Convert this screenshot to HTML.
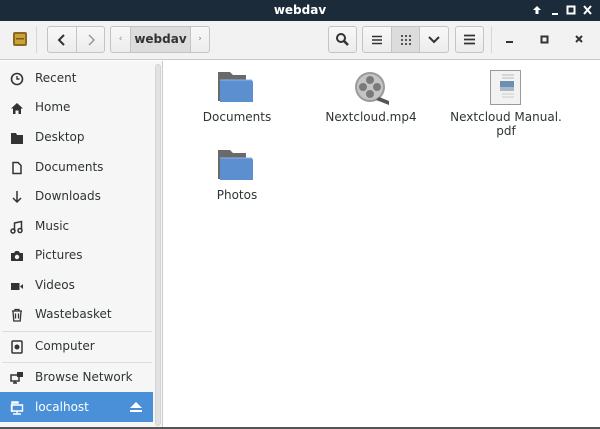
<!DOCTYPE html>
<html><head><style>
*{margin:0;padding:0;box-sizing:border-box}
body{width:600px;height:429px;overflow:hidden;font-family:"DejaVu Sans","Liberation Sans",sans-serif;font-size:12px;color:#2e3436;background:#fff;position:relative}
.abs{position:absolute}
#title{left:0;top:0;width:600px;height:21px;background:#1c2b3a;color:#fff;font-weight:bold;font-size:12px;text-align:center;line-height:21px}
#tb{left:0;top:21px;width:600px;height:39px;background:#f2f2f2;border-bottom:1px solid #c8c8c8}
.btn{position:absolute;top:26px;height:27px;border:1px solid #c4c4c4;border-radius:3px;background:linear-gradient(#f8f8f8,#ececec)}
.seg{position:absolute;top:0;height:25px;border-right:1px solid #c4c4c4;text-align:center;line-height:25px;color:#333}
#side{left:0;top:61px;width:163px;height:368px;background:#f6f6f6;border-right:1px solid #ccc}
.it{position:absolute;left:0;width:153px;height:29px;line-height:31px;padding-left:35px;font-size:12px;color:#2e3436}
.ic{position:absolute;left:10px;top:9px;width:14px;height:14px}
.lbl{position:absolute;font-size:12px;text-align:center;color:#2e3436}
</style></head><body>
<div id="title" class="abs">webdav
<svg class="abs" style="right:0;top:0" width="70" height="21"><g fill="#fff" stroke="#fff"><path d="M7 6l-4 4h2.5v4h3v-4H11z" stroke="none"/><rect x="22" y="13" width="6" height="2" stroke="none"/><rect x="37.5" y="6.5" width="7" height="7" fill="none" stroke-width="2"/><path d="M54 6l7 8M61 6l-7 8" stroke-width="2"/></g></svg>
</div>
<div id="tb" class="abs"></div>
<svg class="abs" style="left:12px;top:31px" width="16" height="16"><rect x="1" y="1" width="14" height="14" rx="2" fill="#8a6a1e"/><rect x="3" y="3" width="10" height="10" fill="#c9a23a"/><rect x="4" y="7" width="8" height="1.5" fill="#7a5a18"/></svg>
<div class="abs" style="left:36px;top:26px;width:1px;height:27px;background:#d6d6d6"></div>
<div class="btn" style="left:47px;width:58px"><div class="seg" style="left:0;width:29px"><svg width="10" height="12" style="margin-top:7px"><path d="M7 1L2 6l5 5" fill="none" stroke="#333" stroke-width="2"/></svg></div><div class="seg" style="left:29px;width:28px;border:none"><svg width="10" height="12" style="margin-top:7px"><path d="M3 1l5 5-5 5" fill="none" stroke="#999" stroke-width="1.5"/></svg></div></div>
<div class="btn" style="left:110px;width:100px"><div class="seg" style="left:0;width:20px;font-size:9px;color:#888">‹</div><div class="seg" style="left:20px;width:60px;background:#dcdcdc;font-weight:bold;color:#333">webdav</div><div class="seg" style="left:80px;width:18px;border:none;font-size:9px;color:#888">›</div></div>
<div class="btn" style="left:328px;width:29px"><svg width="27" height="25"><circle cx="12" cy="11" r="4" fill="none" stroke="#333" stroke-width="2"/><path d="M15 14l4 4" stroke="#333" stroke-width="2.5"/></svg></div>
<div class="btn" style="left:362px;width:87px"><div class="seg" style="left:0;width:29px"><svg width="12" height="10" style="margin-top:8px"><path d="M1 1.5h10M1 5h10M1 8.5h10" stroke="#333" stroke-width="1.6"/></svg></div><div class="seg" style="left:29px;width:28px;background:#dcdcdc"><svg width="10" height="10" style="margin-top:8px" fill="#555"><rect x="0" y="0" width="2" height="2"/><rect x="4" y="0" width="2" height="2"/><rect x="8" y="0" width="2" height="2"/><rect x="0" y="4" width="2" height="2"/><rect x="4" y="4" width="2" height="2"/><rect x="8" y="4" width="2" height="2"/><rect x="0" y="8" width="2" height="2"/><rect x="4" y="8" width="2" height="2"/><rect x="8" y="8" width="2" height="2"/></svg></div><div class="seg" style="left:57px;width:28px;border:none"><svg width="14" height="10" style="margin-top:8px"><path d="M2 2l5 5 5-5" fill="none" stroke="#333" stroke-width="2"/></svg></div></div>
<div class="btn" style="left:455px;width:29px"><svg width="27" height="25"><path d="M8 8.5h11M8 12.5h11M8 16.5h11" stroke="#333" stroke-width="1.8"/></svg></div>
<div class="abs" style="left:491px;top:26px;width:1px;height:27px;background:#d6d6d6"></div>
<svg class="abs" style="left:500px;top:30px" width="95" height="20"><rect x="6" y="11" width="7" height="2" fill="#333"/><rect x="41.5" y="6.5" width="6" height="6" fill="none" stroke="#333" stroke-width="2"/><path d="M76 6l6 6M82 6l-6 6" stroke="#333" stroke-width="2"/></svg>
<div id="side" class="abs"></div>
<div class="abs" style="left:155px;top:64px;width:6px;height:362px;border-radius:3px;background:#e2e2e2;border:1px solid #d4d4d4"></div>
<div class="it" style="top:63px"><svg class="ic" viewBox="0 0 14 14"><circle cx="7" cy="7" r="5.5" fill="none" stroke="#333" stroke-width="1.6"/><path d="M7 4v3h2.5" fill="none" stroke="#333" stroke-width="1.4"/></svg>Recent</div>
<div class="it" style="top:92px"><svg class="ic" viewBox="0 0 14 14"><path d="M1 7.5L7 2l6 5.5H11V13H8.5V9.5h-3V13H3V7.5z" fill="#333"/></svg>Home</div>
<div class="it" style="top:122px"><svg class="ic" viewBox="0 0 14 14"><path d="M1 2h5l1 2h6v9H1z" fill="#333"/></svg>Desktop</div>
<div class="it" style="top:152px"><svg class="ic" viewBox="0 0 14 14"><path d="M3 1.5h5l3 3v8H3z" fill="none" stroke="#333" stroke-width="1.5"/></svg>Documents</div>
<div class="it" style="top:181px"><svg class="ic" viewBox="0 0 14 14"><path d="M7 1v10M3 8l4 4 4-4" fill="none" stroke="#333" stroke-width="1.5"/></svg>Downloads</div>
<div class="it" style="top:211px"><svg class="ic" viewBox="0 0 14 14"><path d="M4.5 11V3l7-1.5V10" fill="none" stroke="#333" stroke-width="1.5"/><circle cx="3" cy="11" r="2" fill="none" stroke="#333" stroke-width="1.5"/><circle cx="10" cy="10.5" r="2" fill="none" stroke="#333" stroke-width="1.5"/></svg>Music</div>
<div class="it" style="top:240px"><svg class="ic" viewBox="0 0 14 14"><path d="M1 4h3l1.5-2h3L10 4h3v8H1z" fill="#333"/><circle cx="7" cy="8" r="2.2" fill="#f6f6f6"/></svg>Pictures</div>
<div class="it" style="top:270px"><svg class="ic" viewBox="0 0 14 14"><rect x="1" y="4" width="8.5" height="7" fill="#333"/><path d="M10 7.5l3-2.5v5z" fill="#333"/></svg>Videos</div>
<div class="it" style="top:299px"><svg class="ic" viewBox="0 0 14 14"><path d="M2 3h10M5 3V1.5h4V3M3 3.5l.8 9.5h6.4L11 3.5M5.5 5.5v5M8.5 5.5v5" fill="none" stroke="#333" stroke-width="1.3"/></svg>Wastebasket</div>
<div class="abs" style="left:2px;top:331px;width:150px;height:1px;background:#ddd"></div>
<div class="it" style="top:331px"><svg class="ic" viewBox="0 0 14 14"><rect x="2" y="1" width="10" height="12" rx="1" fill="none" stroke="#333" stroke-width="1.5"/><circle cx="7" cy="7" r="2.5" fill="#333"/></svg>Computer</div>
<div class="abs" style="left:2px;top:362px;width:150px;height:1px;background:#ddd"></div>
<div class="it" style="top:362px"><svg class="ic" viewBox="0 0 14 14"><rect x="1" y="4" width="8" height="6" fill="none" stroke="#333" stroke-width="1.5"/><path d="M3 12h4M5 10v2" stroke="#333" stroke-width="1.5"/><rect x="7" y="1" width="6" height="5" fill="#333"/></svg>Browse Network</div>
<div class="it" style="top:392px;height:30px;line-height:30px;background:#4a90d9;color:#fff"><svg class="ic" viewBox="0 0 14 14"><path d="M2 1h6v1H2zM2 2v9M1.5 4h11v6h-11zM7 10v2.5M3 13h8" fill="none" stroke="#fff" stroke-width="1.4"/></svg>localhost<svg class="abs" style="left:129px;top:9px" width="14" height="12"><path d="M7 1l6 6H1z" fill="#fff"/><rect x="1" y="9" width="12" height="2" fill="#fff"/></svg></div>
<svg class="abs" style="left:217px;top:70px" width="38" height="34"><path d="M1 2h12l3 3h13v26H1z" fill="#6a6a6a"/><path d="M3 10h32l1 2v20H3z" fill="#5c8fd0"/><path d="M3 10h32" stroke="#8eb6e8"/></svg>
<div class="lbl" style="left:195px;top:110px;width:84px">Documents</div>
<svg class="abs" style="left:352px;top:70px" width="40" height="36"><circle cx="18" cy="17" r="15" fill="#9a9a9a"/><circle cx="18" cy="17" r="13" fill="#c4c4c4"/><circle cx="18" cy="10" r="4" fill="#7a7a7a"/><circle cx="11" cy="17" r="4" fill="#7a7a7a"/><circle cx="25" cy="17" r="4" fill="#7a7a7a"/><circle cx="18" cy="24" r="4" fill="#7a7a7a"/><path d="M27 27l10 4v4l-13-5z" fill="#555"/></svg>
<div class="lbl" style="left:320px;top:110px;width:102px">Nextcloud.mp4</div>
<svg class="abs" style="left:490px;top:70px" width="32" height="36"><rect x="0.5" y="0.5" width="30" height="34" fill="#f2f2f2" stroke="#9a9a9a"/><path d="M12 5h12M12 8h12" stroke="#bbb"/><rect x="10" y="11" width="14" height="10" fill="#6d8fb0"/><rect x="10" y="17" width="14" height="4" fill="#a8b8c8"/><path d="M12 24h12M12 27h12" stroke="#ccc"/></svg>
<div class="lbl" style="left:446px;top:110px;width:120px;line-height:14px">Nextcloud Manual.<br>pdf</div>
<svg class="abs" style="left:217px;top:148px" width="38" height="34"><path d="M1 2h12l3 3h13v26H1z" fill="#6a6a6a"/><path d="M3 10h32l1 2v20H3z" fill="#5c8fd0"/><path d="M3 10h32" stroke="#8eb6e8"/></svg>
<div class="lbl" style="left:195px;top:188px;width:84px">Photos</div>
<div class="abs" style="left:0;top:427px;width:600px;height:2px;background:#555"></div>
</body></html>
